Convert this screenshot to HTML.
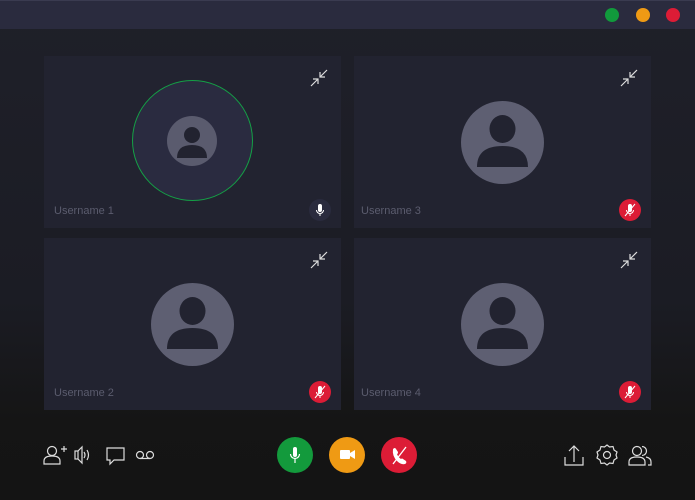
<!DOCTYPE html>
<html><head><style>
*{margin:0;padding:0;box-sizing:border-box}
body{width:695px;height:500px;overflow:hidden;font-family:"Liberation Sans",sans-serif;background:linear-gradient(#1f2029 0,#1b1c24 300px,#151515 420px,#141414 100%);position:relative}
.top{position:absolute;left:0;top:0;width:695px;height:29px;background:#2a2b3e;border-top:1px solid #3a3b50}
.dot{position:absolute;top:7px;width:14px;height:14px;border-radius:50%}
.tile{position:absolute;width:297px;height:172px;background:#222330}
.name{position:absolute;left:10px;bottom:11px;font-size:11px;color:#5b5c6e}
.r .name{left:7px}
.av{position:absolute;border-radius:50%;background:#5e5f72}
.mute{position:absolute;right:10px;bottom:7px;width:22px;height:22px;border-radius:50%;background:#dc1c36}
.btn{position:absolute;top:437px;width:36px;height:36px;border-radius:50%}
svg{position:absolute}
</style></head><body>
<div class="top">
<div class="dot" style="left:605px;background:#119a3c"></div>
<div class="dot" style="left:636px;background:#ef9a14"></div>
<div class="dot" style="left:666px;background:#dc1c36"></div>
</div>

<div class="tile" style="left:44px;top:56px">
<div style="position:absolute;left:88px;top:24px;width:121px;height:121px;border-radius:50%;border:1.3px solid #14a046;background:#2a2b40"></div>
<div class="av" style="left:123px;top:60px;width:50px;height:50px;background:#5a5b6e"></div>
<svg style="left:123px;top:60px" width="50" height="50"><circle cx="25" cy="19" r="8" fill="#222330"/><path d="M10 42 Q10 29 25 29 Q40 29 40 42Z" fill="#222330"/></svg>
<svg width="20" height="20" viewBox="0 0 20 20" style="right:12px;top:12px"><path d="M11 9L18 2M11 4V9H16M9 11L2 18M4 11H9V16" stroke="#ddd" stroke-width="1.2" fill="none"/></svg>
<div class="name">Username 1</div>
<div class="mute" style="background:#2a2b3e"><svg width="22" height="22"><rect x="9" y="5" width="4" height="8" rx="2" fill="#fff"/><path d="M7.5 11a3.5 3.5 0 0 0 7 0M11 14.5V17" stroke="#fff" stroke-width="1" fill="none"/></svg></div>
</div>

<div class="tile r" style="left:354px;top:56px">
<div class="av" style="left:107px;top:45px;width:83px;height:83px"></div>
<svg style="left:107px;top:45px" width="83" height="83"><ellipse cx="41.5" cy="28" rx="13" ry="14" fill="#222330"/><path d="M16 66 Q16 45 41.5 45 Q67 45 67 66Z" fill="#222330"/></svg>
<svg width="20" height="20" viewBox="0 0 20 20" style="right:12px;top:12px"><path d="M11 9L18 2M11 4V9H16M9 11L2 18M4 11H9V16" stroke="#ddd" stroke-width="1.2" fill="none"/></svg>
<div class="name">Username 3</div>
<div class="mute"><svg width="22" height="22"><rect x="9" y="5" width="4" height="8" rx="2" fill="#fff"/><path d="M7.5 11a3.5 3.5 0 0 0 7 0M11 14.5V17M6 17L16 5" stroke="#fff" stroke-width="1" fill="none"/></svg></div>
</div>

<div class="tile" style="left:44px;top:238px">
<div class="av" style="left:107px;top:45px;width:83px;height:83px"></div>
<svg style="left:107px;top:45px" width="83" height="83"><ellipse cx="41.5" cy="28" rx="13" ry="14" fill="#222330"/><path d="M16 66 Q16 45 41.5 45 Q67 45 67 66Z" fill="#222330"/></svg>
<svg width="20" height="20" viewBox="0 0 20 20" style="right:12px;top:12px"><path d="M11 9L18 2M11 4V9H16M9 11L2 18M4 11H9V16" stroke="#ddd" stroke-width="1.2" fill="none"/></svg>
<div class="name">Username 2</div>
<div class="mute"><svg width="22" height="22"><rect x="9" y="5" width="4" height="8" rx="2" fill="#fff"/><path d="M7.5 11a3.5 3.5 0 0 0 7 0M11 14.5V17M6 17L16 5" stroke="#fff" stroke-width="1" fill="none"/></svg></div>
</div>

<div class="tile r" style="left:354px;top:238px">
<div class="av" style="left:107px;top:45px;width:83px;height:83px"></div>
<svg style="left:107px;top:45px" width="83" height="83"><ellipse cx="41.5" cy="28" rx="13" ry="14" fill="#222330"/><path d="M16 66 Q16 45 41.5 45 Q67 45 67 66Z" fill="#222330"/></svg>
<svg width="20" height="20" viewBox="0 0 20 20" style="right:12px;top:12px"><path d="M11 9L18 2M11 4V9H16M9 11L2 18M4 11H9V16" stroke="#ddd" stroke-width="1.2" fill="none"/></svg>
<div class="name">Username 4</div>
<div class="mute"><svg width="22" height="22"><rect x="9" y="5" width="4" height="8" rx="2" fill="#fff"/><path d="M7.5 11a3.5 3.5 0 0 0 7 0M11 14.5V17M6 17L16 5" stroke="#fff" stroke-width="1" fill="none"/></svg></div>
</div>

<svg style="left:42px;top:444px" width="120" height="24" fill="none" stroke="#ddd" stroke-width="1.2">
<circle cx="10" cy="7" r="4.5"/><path d="M2 20v-3q0-5 8-5q8 0 8 5v3Z"/><path d="M19 5h6M22 2v6"/>
<rect x="33" y="7" width="3" height="8"/><path d="M36 7l4-4v16l-4-4M42 8q2 3 0 6M45 6q3 5 0 10"/>
<path d="M65 4h17v12h-10l-4 4v-4h-3Z"/>
<circle cx="98" cy="11" r="3.5"/><circle cx="108" cy="11" r="3.5"/><path d="M98 14.5h10"/>
</svg>

<div class="btn" style="left:277px;background:#139a3c"><svg width="36" height="36"><rect x="16" y="10" width="4" height="10" rx="2" fill="#fff"/><path d="M13.5 17a4.5 4.5 0 0 0 9 0M18 21.5V26" stroke="#fff" stroke-width="1.2" fill="none"/></svg></div>
<div class="btn" style="left:329px;background:#ef9a14"><svg width="36" height="36"><rect x="11" y="13" width="10" height="9" rx="1" fill="#fff"/><path d="M21 16l5-3v9l-5-3Z" fill="#fff"/></svg></div>
<div class="btn" style="left:381px;background:#dc1c36"><svg width="36" height="36"><path d="M12 12q2-2 3 0l2 3q0 2-1 2q1 3 4 5q1-1 2 0l3 2q1 2-1 3q-4 1-8-3q-5-5-4-12Z" fill="#fff"/><path d="M12 27L25 10" stroke="#fff" stroke-width="1.3"/></svg></div>

<svg style="left:563px;top:443px" width="120" height="26" fill="none" stroke="#ddd" stroke-width="1.2">
<path d="M2 14v8h18v-8M11 19V3M6 8l5-5 5 5"/>
<circle cx="44" cy="12" r="3.5"/><path d="M44 2l2.5 2 3.5-.5 1 3.5 3 2-1 3 1 3-3 2-1 3.5-3.5-.5L44 22l-2.5-2-3.5.5-1-3.5-3-2 1-3-1-3 3-2 1-3.5 3.5.5Z"/>
<circle cx="74" cy="8" r="4.5"/><path d="M66 22v-3q0-5 8-5q8 0 8 5v3Z"/><path d="M79 3.5a4.5 4.5 0 0 1 0 9M83 14q5 1 5 5v3h-3"/>
</svg>
</body></html>
